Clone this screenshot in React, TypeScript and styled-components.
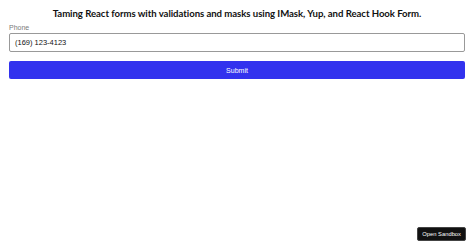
import React from "react";
import styled, { createGlobalStyle } from "styled-components";

const Global = createGlobalStyle`
  html, body { margin: 0; padding: 0; background: #fff; }
  body { font-family: "Liberation Sans", Arial, sans-serif; }
`;

const Page = styled.div`
  width: 474px;
  height: 248px;
  position: relative;
  box-sizing: border-box;
  padding: 7px 9px 0 9px;
`;

const Title = styled.h1`
  margin: 0 0 2px 0;
  text-align: center;
  font-family: "Lato", sans-serif;
  font-weight: 700;
  font-size: 9.6px;
  letter-spacing: -0.05px;
  line-height: 14px;
  color: #111;
  white-space: nowrap;
`;

const Form = styled.form`
  display: flex;
  flex-direction: column;
`;

const Label = styled.label`
  font-size: 7px;
  line-height: 9px;
  color: #7a7a7a;
  margin-bottom: 1px;
`;

const Input = styled.input`
  box-sizing: border-box;
  height: 19px;
  width: 100%;
  border: 1px solid #999;
  border-radius: 2px;
  padding: 0 5px;
  font-family: "Liberation Sans", Arial, sans-serif;
  font-size: 7.5px;
  color: #111;
  margin-bottom: 9px;
  outline: none;
`;

const SubmitButton = styled.button`
  box-sizing: border-box;
  height: 18px;
  width: 100%;
  border: none;
  border-radius: 2px;
  background: #3232ee;
  color: #fff;
  font-family: "Liberation Sans", Arial, sans-serif;
  font-size: 7px;
  cursor: pointer;
`;

const SandboxLink = styled.a`
  position: absolute;
  right: 8px;
  bottom: 7px;
  background: #111;
  color: #fff;
  border: 1px solid #444;
  border-radius: 2px;
  font-size: 5.8px;
  line-height: 12px;
  padding: 0 4px;
  text-decoration: none;
`;

export default function App() {
  return (
    <>
      <Global />
      <Page>
        <Title>Taming React forms with validations and masks using IMask, Yup, and React Hook Form.</Title>
        <Form onSubmit={(e) => e.preventDefault()}>
          <Label htmlFor="phone">Phone</Label>
          <Input id="phone" defaultValue="(169) 123-4123" />
          <SubmitButton type="submit">Submit</SubmitButton>
        </Form>
        <SandboxLink href="#">Open Sandbox</SandboxLink>
      </Page>
    </>
  );
}
